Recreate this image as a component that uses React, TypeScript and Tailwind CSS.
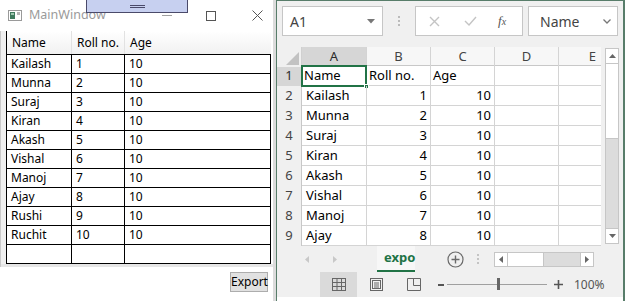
import React from "react";

const people = [
  ["Kailash", "1", "10"],
  ["Munna", "2", "10"],
  ["Suraj", "3", "10"],
  ["Kiran", "4", "10"],
  ["Akash", "5", "10"],
  ["Vishal", "6", "10"],
  ["Manoj", "7", "10"],
  ["Ajay", "8", "10"],
  ["Rushi", "9", "10"],
  ["Ruchit", "10", "10"],
  ["", "", ""],
];

const sheetRows = people.slice(0, 8);

const MainWindow = () => {
  return (
    <div className="w-[273px] h-full bg-white flex flex-col relative">
      {/* debug toolbar stub */}
      <div className="absolute left-[86px] top-0 w-[102px] h-[13px] bg-[#c7d0f0] border border-[#4a4a6a] border-t-0 flex items-center justify-center">
        <div className="w-[15px] h-[3px] border-y border-[#4a4a6a]" />
      </div>

      {/* Title bar */}
      <div className="h-[31px] flex items-center shrink-0">
        <svg className="ml-[8px]" width="14" height="11" viewBox="0 0 14 11">
          <rect x="0.5" y="0.5" width="13" height="10" fill="#fff" stroke="#9a9a9a" />
          <rect x="2" y="2" width="5" height="7" fill="#3f7b5e" />
          <rect x="3" y="3" width="3" height="2" fill="#9fc7b0" />
          <rect x="9" y="2" width="3" height="3" fill="#b5b5b5" />
        </svg>
        <span className="ml-[7px] text-[12.5px] text-[#9a9a9a]">MainWindow</span>
        <div className="ml-[56px] w-[10px] h-px bg-[#a0a0a0]" />
        <div className="ml-[34px] w-[10px] h-[10px] border border-[#555]" />
        <svg className="ml-[36px]" width="11" height="11" viewBox="0 0 11 11">
          <path d="M0.5 0.5 L10.5 10.5 M10.5 0.5 L0.5 10.5" stroke="#555" strokeWidth="1" />
        </svg>
      </div>

      {/* DataGrid */}
      <div className="flex border-l border-[#c9c9c9]">
        <div className="w-[5px] bg-[#f0f0f0]" />
        <div className="w-[265px] border-l border-black">
          <div className="h-[24px] grid grid-cols-[65px_53px_146px] bg-gradient-to-b from-white to-[#f1f1f1] border-b border-black">
            {["Name", "Roll no.", "Age"].map((h, i) => (
              <div
                key={h}
                className={`flex items-center pl-[5px] text-[12px] text-black ${i < 2 ? "border-r border-[#e2e2e2]" : ""}`}
              >
                {h}
              </div>
            ))}
          </div>
          {people.map((row, r) => (
            <div
              key={r}
              className="h-[19px] grid grid-cols-[65px_53px_146px] border-b border-black"
            >
              {row.map((c, i) => (
                <div
                  key={i}
                  className="flex items-center pl-[4px] text-[12px] leading-none text-black border-r border-black"
                >
                  {c}
                </div>
              ))}
            </div>
          ))}
        </div>
      </div>
      <div className="h-[3px] bg-[#e6e6e6] border-l border-[#c9c9c9]" />

      <div className="flex-1 flex justify-end items-start pt-[5px] pr-[5px]">
        <button className="h-[20px] w-[38px] bg-[#e1e1e1] border border-[#adadad] text-[12px] leading-none text-black">
          Export
        </button>
      </div>
    </div>
  );
};

const Excel = () => {
  const cols = ["A", "B", "C", "D", "E"];
  return (
    <div className="w-[349px] h-full flex flex-col bg-[#f0f0f0] border-l border-t border-r-2 border-[#587d6a] text-[#444]">
      {/* Formula bar */}
      <div className="h-[46px] shrink-0 flex items-start pt-[5px]">
        <div className="ml-[5px] w-[101px] h-[30px] bg-white border border-[#c6c6c6] flex items-center justify-between px-[7px]">
          <span className="text-[14px] text-[#444]">A1</span>
          <svg width="8" height="5" viewBox="0 0 8 5">
            <path d="M0 0 H8 L4 4.5 Z" fill="#777" />
          </svg>
        </div>
        <div className="w-[32px] h-[30px] flex flex-col items-center justify-center gap-[2px]">
          <div className="w-[2px] h-[2px] bg-[#bbb]" />
          <div className="w-[2px] h-[2px] bg-[#bbb]" />
          <div className="w-[2px] h-[2px] bg-[#bbb]" />
        </div>
        <div className="w-[108px] h-[30px] bg-white border border-[#c6c6c6] flex items-center">
          <svg className="ml-[13px]" width="11" height="11" viewBox="0 0 11 11">
            <path d="M1 1 L10 10 M10 1 L1 10" stroke="#c4c4c4" strokeWidth="1.4" />
          </svg>
          <svg className="ml-[24px]" width="13" height="10" viewBox="0 0 13 10">
            <path d="M1 5 L5 9 L12 1" stroke="#c4c4c4" strokeWidth="1.4" fill="none" />
          </svg>
          <span className="ml-[21px] text-[13px] italic text-[#555] font-['Liberation_Serif',serif]">
            f<span className="text-[10px]">x</span>
          </span>
        </div>
        <div className="ml-[5px] w-[90px] h-[30px] bg-white border border-[#c6c6c6] flex items-center justify-between pl-[11px] pr-[6px]">
          <span className="text-[14px] text-[#444]">Name</span>
          <svg width="8" height="5" viewBox="0 0 8 5">
            <path d="M0.5 0.5 L4 4 L7.5 0.5" stroke="#777" strokeWidth="1.3" fill="none" />
          </svg>
        </div>
      </div>

      {/* Sheet grid */}
      <div className="h-[199px] shrink-0 flex">
        <div className="w-[324px] flex flex-col bg-white">
          <div className="h-[19px] grid grid-cols-[25px_65px_64px_64px_64px_42px] bg-[#f7f7f7] border-b border-[#c8c8c8]">
            <div className="relative bg-[#f0f0f0] border-r border-[#d0d0d0]">
              <svg className="absolute right-[2px] bottom-[2px]" width="13" height="13" viewBox="0 0 13 13">
                <path d="M13 0 V13 H0 Z" fill="#c2c2c2" />
              </svg>
            </div>
            {cols.map((c, i) => (
              <div
                key={c}
                className={`flex items-center justify-center text-[13px] border-r border-[#d4d4d4] ${i === 0 ? "bg-[#d6d6d6] text-[#2b2b2b]" : ""} ${i === 4 ? "justify-end pr-[5px] border-r-0" : ""}`}
              >
                {c}
              </div>
            ))}
          </div>
          {[["Name", "Roll no.", "Age"], ...sheetRows.map((r) => [r[0], r[1], r[2]])].map(
            (row, r) => (
              <div
                key={r}
                className="h-[20px] grid grid-cols-[25px_65px_64px_64px_64px_42px] border-b border-[#d4d4d4]"
              >
                <div
                  className={`flex items-center justify-center text-[13px] border-r border-[#c8c8c8] ${r === 0 ? "bg-[#d6d6d6] text-[#2b2b2b]" : "bg-[#f0f0f0]"}`}
                >
                  {r + 1}
                </div>
                {row.map((c, i) => (
                  <div
                    key={i}
                    className={`relative flex items-center text-[13px] text-black border-r border-[#d4d4d4] ${r === 0 ? "pl-[2px]" : i === 0 ? "pl-[4px]" : "justify-end pr-[3px]"}`}
                  >
                    {c}
                    {r === 0 && i === 0 && (
                      <>
                        <div className="absolute -left-px -top-px -right-px -bottom-px border-2 border-[#217346]" />
                        <div className="absolute -right-[3px] -bottom-[3px] w-[5px] h-[5px] bg-[#217346] border border-white" />
                      </>
                    )}
                  </div>
                ))}
                <div className="border-r border-[#d4d4d4]" />
                <div />
              </div>
            )
          )}
        </div>
        {/* vertical scrollbar */}
        <div className="ml-[4px] mt-[1px] w-[14px] h-[196px] flex flex-col border border-[#c6c6c6] bg-[#dcdcdc]">
          <div className="h-[15px] bg-white border-b border-[#c6c6c6] flex items-center justify-center">
            <svg width="7" height="4" viewBox="0 0 7 4">
              <path d="M0 4 H7 L3.5 0 Z" fill="#666" />
            </svg>
          </div>
          <div className="h-[75px] bg-white border-b border-[#c6c6c6]" />
          <div className="flex-1" />
          <div className="h-[15px] bg-white border-t border-[#c6c6c6] flex items-center justify-center">
            <svg width="7" height="4" viewBox="0 0 7 4">
              <path d="M0 0 H7 L3.5 4 Z" fill="#666" />
            </svg>
          </div>
        </div>
      </div>

      {/* Sheet tabs */}
      <div className="h-[26px] shrink-0 flex items-center">
        <svg className="ml-[28px]" width="4" height="7" viewBox="0 0 4 7">
          <path d="M4 0 V7 L0 3.5 Z" fill="#c8c8c8" />
        </svg>
        <svg className="ml-[24px]" width="4" height="7" viewBox="0 0 4 7">
          <path d="M0 0 V7 L4 3.5 Z" fill="#c8c8c8" />
        </svg>
        <div className="ml-[40px] w-[38px] h-full bg-[#f7f7f7] border-b-2 border-[#217346] flex items-center pl-[7px]">
          <span className="text-[13px] font-bold text-[#217346] whitespace-nowrap">expo</span>
        </div>
        <svg className="ml-[32px]" width="17" height="17" viewBox="0 0 17 17">
          <circle cx="8.5" cy="8.5" r="7.5" fill="none" stroke="#6a6a6a" strokeWidth="1.2" />
          <path d="M8.5 4.5 V12.5 M4.5 8.5 H12.5" stroke="#6a6a6a" strokeWidth="1.4" />
        </svg>
        <div className="ml-[13px] flex flex-col gap-[2px]">
          <div className="w-[2px] h-[2px] bg-[#c4c4c4]" />
          <div className="w-[2px] h-[2px] bg-[#c4c4c4]" />
          <div className="w-[2px] h-[2px] bg-[#c4c4c4]" />
        </div>
        <div className="ml-[15px] w-[100px] h-[15px] flex border border-[#c6c6c6] bg-[#dcdcdc]">
          <div className="w-[13px] bg-white border-r border-[#c6c6c6] flex items-center justify-center">
            <svg width="4" height="7" viewBox="0 0 4 7">
              <path d="M4 0 V7 L0 3.5 Z" fill="#666" />
            </svg>
          </div>
          <div className="w-[36px] bg-white border-r border-[#c6c6c6]" />
          <div className="flex-1" />
          <div className="w-[13px] bg-white border-l border-[#c6c6c6] flex items-center justify-center">
            <svg width="4" height="7" viewBox="0 0 4 7">
              <path d="M0 0 V7 L4 3.5 Z" fill="#666" />
            </svg>
          </div>
        </div>
      </div>

      {/* Status bar */}
      <div className="h-[25px] shrink-0 flex items-center">
        <div className="ml-[43px] w-[37px] h-full bg-[#dadada] flex items-center justify-center">
          <svg width="14" height="13" viewBox="0 0 14 13">
            <rect x="0.5" y="0.5" width="13" height="12" fill="none" stroke="#666" />
            <path d="M5 0.5 V12.5 M9.5 0.5 V12.5 M0.5 4.5 H13.5 M0.5 8.5 H13.5" stroke="#666" />
          </svg>
        </div>
        <svg className="ml-[13px]" width="13" height="13" viewBox="0 0 13 13">
          <rect x="0.5" y="0.5" width="12" height="12" fill="none" stroke="#666" />
          <rect x="2.5" y="2.5" width="8" height="8" fill="none" stroke="#666" />
          <path d="M4 5 H9 M4 7 H9 M4 9 H9" stroke="#666" />
        </svg>
        <svg className="ml-[24px]" width="14" height="13" viewBox="0 0 14 13">
          <path d="M0.5 0.5 H13.5 V12.5 H0.5 Z M6.5 0.5 V7.5 H13.5" fill="none" stroke="#666" />
        </svg>
        <div className="ml-[17px] w-[6px] h-[2px] bg-[#555]" />
        <div className="ml-[3px] relative w-[100px] h-px bg-[#a0a0a0]">
          <div className="absolute left-[50px] -top-[6px] w-[3px] h-[12px] bg-[#666]" />
        </div>
        <svg className="ml-[7px]" width="9" height="9" viewBox="0 0 9 9">
          <path d="M4.5 0 V9 M0 4.5 H9" stroke="#555" strokeWidth="1.6" />
        </svg>
        <span className="ml-[11px] text-[12px] text-[#555]">100%</span>
      </div>
      <div className="flex-1 bg-white" />
    </div>
  );
};

export default function App() {
  return (
    <div className="w-[625px] h-[301px] flex overflow-hidden bg-white font-['Noto_Sans',sans-serif]">
      <MainWindow />
      <div className="w-[3px] h-full bg-[#dcdcdc]" />
      <Excel />
    </div>
  );
}
